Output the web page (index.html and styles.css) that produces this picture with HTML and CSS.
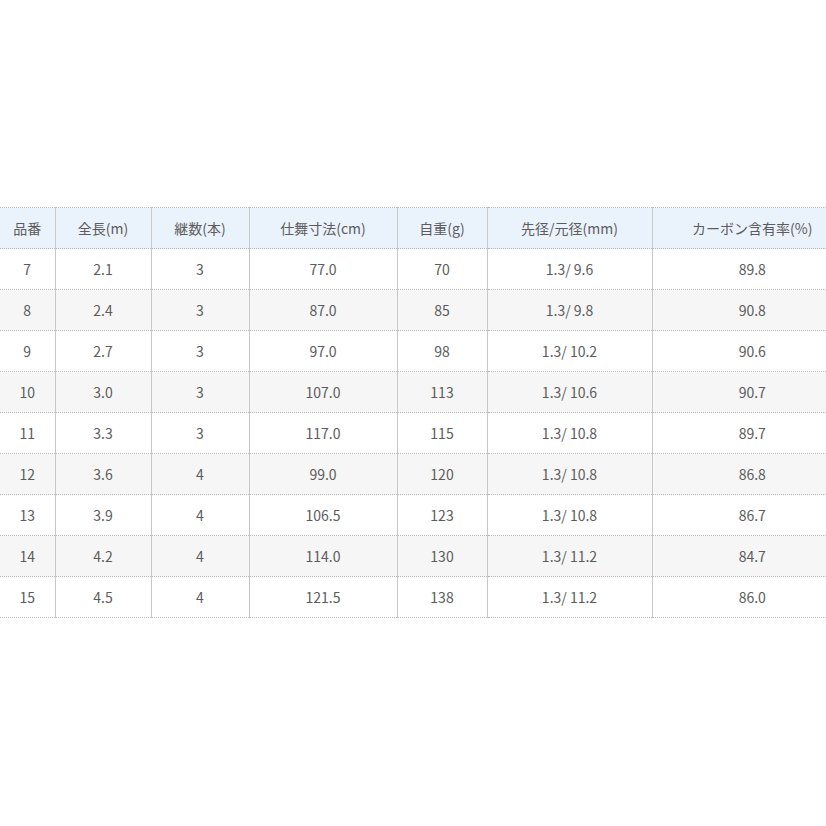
FILE: index.html
```html
<!DOCTYPE html>
<html lang="ja">
<head>
<meta charset="utf-8">
<title>スペック表</title>
<link rel="stylesheet" href="styles.css">
</head>
<body>
<div class="page">
<table class="spec">
<colgroup>
<col class="c1"><col class="c2"><col class="c3"><col class="c4"><col class="c5"><col class="c6"><col class="c7">
</colgroup>
<thead>
<tr><th>品番</th><th>全長(m)</th><th>継数(本)</th><th>仕舞寸法(cm)</th><th>自重(g)</th><th>先径/元径(mm)</th><th>カーボン含有率(%)</th></tr>
</thead>
<tbody>
<tr><td>7</td><td>2.1</td><td>3</td><td>77.0</td><td>70</td><td>1.3/ 9.6</td><td>89.8</td></tr>
<tr><td>8</td><td>2.4</td><td>3</td><td>87.0</td><td>85</td><td>1.3/ 9.8</td><td>90.8</td></tr>
<tr><td>9</td><td>2.7</td><td>3</td><td>97.0</td><td>98</td><td>1.3/ 10.2</td><td>90.6</td></tr>
<tr><td>10</td><td>3.0</td><td>3</td><td>107.0</td><td>113</td><td>1.3/ 10.6</td><td>90.7</td></tr>
<tr><td>11</td><td>3.3</td><td>3</td><td>117.0</td><td>115</td><td>1.3/ 10.8</td><td>89.7</td></tr>
<tr><td>12</td><td>3.6</td><td>4</td><td>99.0</td><td>120</td><td>1.3/ 10.8</td><td>86.8</td></tr>
<tr><td>13</td><td>3.9</td><td>4</td><td>106.5</td><td>123</td><td>1.3/ 10.8</td><td>86.7</td></tr>
<tr><td>14</td><td>4.2</td><td>4</td><td>114.0</td><td>130</td><td>1.3/ 11.2</td><td>84.7</td></tr>
<tr><td>15</td><td>4.5</td><td>4</td><td>121.5</td><td>138</td><td>1.3/ 11.2</td><td>86.0</td></tr>
</tbody>
</table>
</div>
</body>
</html>
```
FILE: styles.css
```css
html, body {
  margin: 0;
  padding: 0;
  background: #ffffff;
}
.page {
  width: 826px;
  height: 826px;
  padding-top: 207px;
  box-sizing: border-box;
  overflow: hidden;
}
.spec {
  width: 852px;
  border-collapse: collapse;
  table-layout: fixed;
  font-family: "Noto Sans CJK JP", "DejaVu Sans", sans-serif;
  font-size: 14px;
  color: #5c5c5c;
}
.c1 { width: 55px; }
.c2 { width: 96px; }
.c3 { width: 98px; }
.c4 { width: 148px; }
.c5 { width: 90px; }
.c6 { width: 165px; }
.c7 { width: 200px; }
.spec th,
.spec td {
  height: 40px;
  padding: 0;
  text-align: center;
  vertical-align: middle;
  line-height: 20px;
  font-weight: normal;
  border-top: 1px dotted #b8b8b8;
  border-bottom: 1px dotted #b8b8b8;
  border-left: 1px solid #c8c8c8;
  border-right: 1px solid #c8c8c8;
}
.spec th:first-child,
.spec td:first-child {
  border-left: none;
}
.spec th:last-child,
.spec td:last-child {
  border-right: none;
}
.spec th {
  background: #eaf2fc;
}
.spec tbody tr:nth-child(even) td {
  background: #f6f6f6;
}
```
